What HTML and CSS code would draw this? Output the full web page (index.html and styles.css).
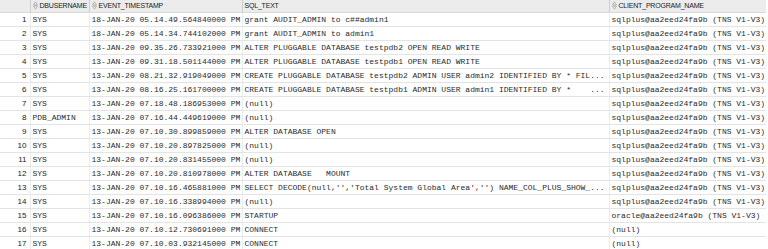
FILE: index.html
```html
<!DOCTYPE html>
<html lang="en">

<head>
    <meta charset="UTF-8" />
    <title>Unified Audit Trail</title>
    <link rel="stylesheet" href="styles.css">
</head>

<body>
    <table class="grid">
        <colgroup>
            <col class="c-num">
            <col class="c-user">
            <col class="c-time">
            <col class="c-sql">
            <col class="c-client">
        </colgroup>
        <thead>
            <tr>
                <th></th>
                <th><svg class="sort" width="5" height="9" viewBox="0 0 5 9"><path d="M0.5 4 L2.5 0.8 L4.5 4 Z M0.5 5 L2.5 8.2 L4.5 5 Z" fill="none" stroke="#a8a8a8" stroke-width="0.8"/></svg>DBUSERNAME</th>
                <th><svg class="sort" width="5" height="9" viewBox="0 0 5 9"><path d="M0.5 4 L2.5 0.8 L4.5 4 Z M0.5 5 L2.5 8.2 L4.5 5 Z" fill="none" stroke="#a8a8a8" stroke-width="0.8"/></svg>EVENT_TIMESTAMP</th>
                <th class="plain">SQL_TEXT</th>
                <th><svg class="sort" width="5" height="9" viewBox="0 0 5 9"><path d="M0.5 4 L2.5 0.8 L4.5 4 Z M0.5 5 L2.5 8.2 L4.5 5 Z" fill="none" stroke="#a8a8a8" stroke-width="0.8"/></svg>CLIENT_PROGRAM_NAME</th>
            </tr>
        </thead>
        <tbody>
            <tr><td class="num">1</td><td>SYS</td><td>18-JAN-20 05.14.49.564840000 PM</td><td>grant AUDIT_ADMIN to c##admin1</td><td>sqlplus@aa2eed24fa9b (TNS V1-V3)</td></tr>
            <tr><td class="num">2</td><td>SYS</td><td>18-JAN-20 05.14.34.744102000 PM</td><td>grant AUDIT_ADMIN to admin1</td><td>sqlplus@aa2eed24fa9b (TNS V1-V3)</td></tr>
            <tr><td class="num">3</td><td>SYS</td><td>13-JAN-20 09.35.26.733921000 PM</td><td>ALTER PLUGGABLE DATABASE testpdb2 OPEN READ WRITE</td><td>sqlplus@aa2eed24fa9b (TNS V1-V3)</td></tr>
            <tr><td class="num">4</td><td>SYS</td><td>13-JAN-20 09.31.18.501144000 PM</td><td>ALTER PLUGGABLE DATABASE testpdb1 OPEN READ WRITE</td><td>sqlplus@aa2eed24fa9b (TNS V1-V3)</td></tr>
            <tr><td class="num">5</td><td>SYS</td><td>13-JAN-20 08.21.32.919049000 PM</td><td>CREATE PLUGGABLE DATABASE testpdb2 ADMIN USER admin2 IDENTIFIED BY * FIL...</td><td>sqlplus@aa2eed24fa9b (TNS V1-V3)</td></tr>
            <tr><td class="num">6</td><td>SYS</td><td>13-JAN-20 08.16.25.161700000 PM</td><td>CREATE PLUGGABLE DATABASE testpdb1 ADMIN USER admin1 IDENTIFIED BY *    ...</td><td>sqlplus@aa2eed24fa9b (TNS V1-V3)</td></tr>
            <tr><td class="num">7</td><td>SYS</td><td>13-JAN-20 07.18.48.186953000 PM</td><td>(null)</td><td>sqlplus@aa2eed24fa9b (TNS V1-V3)</td></tr>
            <tr><td class="num">8</td><td>PDB_ADMIN</td><td>13-JAN-20 07.16.44.449619000 PM</td><td>(null)</td><td>sqlplus@aa2eed24fa9b (TNS V1-V3)</td></tr>
            <tr><td class="num">9</td><td>SYS</td><td>13-JAN-20 07.10.30.899859000 PM</td><td>ALTER DATABASE OPEN</td><td>sqlplus@aa2eed24fa9b (TNS V1-V3)</td></tr>
            <tr><td class="num">10</td><td>SYS</td><td>13-JAN-20 07.10.20.897825000 PM</td><td>(null)</td><td>sqlplus@aa2eed24fa9b (TNS V1-V3)</td></tr>
            <tr><td class="num">11</td><td>SYS</td><td>13-JAN-20 07.10.20.831455000 PM</td><td>(null)</td><td>sqlplus@aa2eed24fa9b (TNS V1-V3)</td></tr>
            <tr><td class="num">12</td><td>SYS</td><td>13-JAN-20 07.10.20.810978000 PM</td><td>ALTER DATABASE   MOUNT</td><td>sqlplus@aa2eed24fa9b (TNS V1-V3)</td></tr>
            <tr><td class="num">13</td><td>SYS</td><td>13-JAN-20 07.10.16.465881000 PM</td><td>SELECT DECODE(null,'','Total System Global Area','') NAME_COL_PLUS_SHOW_...</td><td>sqlplus@aa2eed24fa9b (TNS V1-V3)</td></tr>
            <tr><td class="num">14</td><td>SYS</td><td>13-JAN-20 07.10.16.338994000 PM</td><td>(null)</td><td>sqlplus@aa2eed24fa9b (TNS V1-V3)</td></tr>
            <tr><td class="num">15</td><td>SYS</td><td>13-JAN-20 07.10.16.096386000 PM</td><td>STARTUP</td><td>oracle@aa2eed24fa9b (TNS V1-V3)</td></tr>
            <tr><td class="num">16</td><td>SYS</td><td>13-JAN-20 07.10.12.730691000 PM</td><td>CONNECT</td><td>(null)</td></tr>
            <tr><td class="num">17</td><td>SYS</td><td>13-JAN-20 07.10.03.932145000 PM</td><td>CONNECT</td><td>(null)</td></tr>
        </tbody>
    </table>
</body>

</html>
```

FILE: styles.css
```css
body {
    margin: 0;
    background: #ffffff;
    overflow: hidden;
}

.grid {
    border-collapse: collapse;
    table-layout: fixed;
    width: 766px;
}

.c-num { width: 30px; }
.c-user { width: 59px; }
.c-time { width: 153px; }
.c-sql { width: 367px; }
.c-client { width: 157px; }

.grid th {
    height: 12px;
    padding: 0 0 0 2px;
    background: #ececec;
    border-left: 1px solid #cdcdcd;
    border-bottom: 1px solid #d8d8d8;
    font-family: "Liberation Sans", Arial, sans-serif;
    font-size: 7px;
    letter-spacing: -0.2px;
    font-weight: normal;
    color: #222;
    text-align: left;
    white-space: nowrap;
    overflow: hidden;
    line-height: 12px;
}

.grid th:first-child {
    border-left: none;
}

.grid th.plain {
    padding-left: 2px;
}

.sort {
    vertical-align: -2px;
    margin-right: 2px;
}

.grid td {
    height: 13px;
    padding: 0 0 0 2px;
    border-left: 1px solid #ececec;
    border-bottom: 1px solid #e4e4e4;
    font-family: "Liberation Mono", "Courier New", monospace;
    font-size: 8px;
    color: #2a2a2a;
    white-space: pre;
    overflow: hidden;
    line-height: 13px;
}

.grid td.num {
    border-left: none;
    padding: 0 3px 0 0;
    text-align: right;
    font-family: "Liberation Sans", Arial, sans-serif;
    font-size: 8px;
    color: #222;
}
```
